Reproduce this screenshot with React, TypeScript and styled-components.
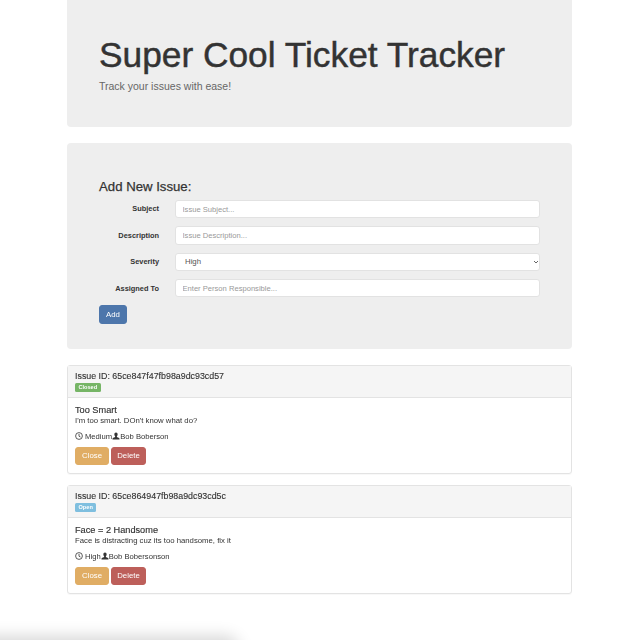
import React from "react";
import styled, { createGlobalStyle } from "styled-components";

const Global = createGlobalStyle`
  html, body { margin: 0; padding: 0; background: #fff; }
  body { font-family: "Liberation Sans", Arial, sans-serif; font-size: 9.33px; line-height: 1.43; color: #333; overflow: hidden; }
  * { box-sizing: border-box; }
`;

const Page = styled.div`
  position: relative;
  width: 623px;
  height: 640px;
  overflow: hidden;
`;

const Container = styled.main`
  width: 505px;
  margin-left: 67px;
  display: flex;
  flex-direction: column;
  will-change: opacity;
`;

const Jumbotron = styled.header`
  height: 127px;
  padding: 33px 32px 0;
  background: #eee;
  border-radius: 0 0 4px 4px;
`;

const Title = styled.h1`
  margin: 0;
  font-size: 35.3px;
  line-height: 44px;
  font-weight: 400;
  color: #333;
  -webkit-text-stroke: 0.45px #333;
`;

const Lead = styled.p`
  margin: 1px 0 0;
  font-size: 10.5px;
  line-height: 17px;
  font-weight: 400;
  color: #666;
`;

const Well = styled.section`
  margin-top: 16px;
  height: 206px;
  padding: 35px 32px 0;
  background: #eee;
  border-radius: 4px;
  display: flex;
  flex-direction: column;
`;

const FormTitle = styled.h3`
  margin: 0 0 4px;
  font-size: 13.2px;
  line-height: 18px;
  font-weight: 400;
  color: #333;
  -webkit-text-stroke: 0.25px #333;
`;

const Form = styled.form`
  display: flex;
  flex-direction: column;
  gap: 8px;
`;

const Row = styled.div`
  display: grid;
  grid-template-columns: 60px 365px;
  column-gap: 16px;
  align-items: center;
`;

const Label = styled.label`
  padding-top: 1px;
  text-align: right;
  font-size: 7.4px;
  font-weight: 700;
  color: #333;
`;

const Input = styled.input`
  width: 100%;
  height: 18.3px;
  padding: 0 6.5px;
  font: 7.6px "Liberation Sans", Arial, sans-serif;
  color: #555;
  background: #fff;
  border: 1px solid #e2e2e2;
  border-radius: 3px;
  outline: none;
  &::placeholder { color: #999; opacity: 1; }
`;

const SelectWrap = styled.div`
  position: relative;
  width: 100%;
  height: 18.6px;
`;

const Select = styled.select`
  width: 100%;
  height: 100%;
  padding: 0 9px;
  appearance: none;
  font: 7.8px "Liberation Sans", Arial, sans-serif;
  color: #555;
  background: #fff;
  border: 1px solid #e2e2e2;
  border-radius: 3px;
  outline: none;
`;

const Chevron = styled.svg`
  position: absolute;
  right: 1.5px;
  top: 6.5px;
  width: 6px;
  height: 6px;
  pointer-events: none;
`;

const AddButton = styled.button`
  align-self: flex-start;
  width: 28px;
  height: 18.5px;
  padding: 0;
  font: 7.8px "Liberation Sans", Arial, sans-serif;
  color: #fff;
  background: #4d76ab;
  border: 1px solid #4d76ab;
  border-radius: 3px;
`;

const Card = styled.article<{ $top: number }>`
  margin-top: ${(p) => p.$top}px;
  height: 109px;
  background: #fff;
  border: 1px solid #e3e3e3;
  border-radius: 3px;
  box-shadow: 0 1px 1px rgba(0, 0, 0, 0.03);
  display: flex;
  flex-direction: column;
`;

const CardHeader = styled.div`
  height: 32px;
  padding: 5px 7px 0;
  background: #f5f5f5;
  border-bottom: 1px solid #e3e3e3;
`;

const IssueId = styled.div`
  font-size: 8.85px;
  line-height: 11px;
  color: #333;
  -webkit-text-stroke: 0.12px #333;
`;

const Badge = styled.span<{ $color: string }>`
  display: block;
  width: fit-content;
  margin-top: 1px;
  padding: 0 3.5px;
  font-size: 5.6px;
  line-height: 9px;
  font-weight: 700;
  color: #fff;
  background: ${(p) => p.$color};
  border-radius: 1.5px;
`;

const CardBody = styled.div`
  padding: 7px 7px 0;
  display: flex;
  flex-direction: column;
`;

const IssueTitle = styled.h3`
  margin: 0;
  font-size: 9.2px;
  line-height: 11px;
  font-weight: 400;
  color: #333;
  -webkit-text-stroke: 0.15px #333;
`;

const IssueText = styled.p`
  margin: 0;
  font-size: 7.75px;
  line-height: 10.5px;
  color: #333;
`;

const Meta = styled.div`
  margin-top: 4px;
  display: flex;
  align-items: center;
  font-size: 7.65px;
  line-height: 11px;
  color: #333;
`;

const ClockSvg = styled.svg`
  width: 8px;
  height: 8px;
  margin-right: 2px;
  flex: none;
`;

const UserSvg = styled.svg`
  width: 8px;
  height: 8px;
  flex: none;
`;

const Actions = styled.div`
  margin-top: 5px;
  display: flex;
  gap: 2px;
`;

const ActionButton = styled.button<{ $color: string; $width: number }>`
  width: ${(p) => p.$width}px;
  height: 18.5px;
  padding: 0;
  font: 7.8px "Liberation Sans", Arial, sans-serif;
  color: #fff;
  background: ${(p) => p.$color};
  border: 1px solid ${(p) => p.$color};
  border-radius: 3px;
`;

const BottomShadow = styled.div`
  position: absolute;
  left: -40px;
  bottom: -30px;
  width: 275px;
  height: 30px;
  border-radius: 10px;
  box-shadow: 0 0 16px 4px rgba(0, 0, 0, 0.16);
`;

const ClockIcon = () => (
  <ClockSvg viewBox="0 0 16 16" fill="none" stroke="#333" strokeWidth="1.6">
    <circle cx="8" cy="8" r="6.8" />
    <path d="M8 4v4.4l3 1.6" />
  </ClockSvg>
);

const UserIcon = () => (
  <UserSvg viewBox="0 0 16 16" fill="#333">
    <path d="M8 1c2.200 0 3.300 1.700 3.300 3.800 0 1.600-.7 3-1.500 3.800v1.300c0 .6 4.700 1.600 5.200 3V15H1v-2.100c.5-1.400 5.200-2.400 5.200-3V8.600C5.400 7.800 4.700 6.400 4.700 4.800 4.700 2.700 5.800 1 8 1z" />
  </UserSvg>
);

type Issue = {
  id: string; status: string; color: string; title: string; text: string; severity: string; person: string;
};

const issues: Issue[] = [
  { id: "65ce847f47fb98a9dc93cd57", status: "Closed", color: "#76b566", title: "Too Smart", text: "I'm too smart. DOn't know what do?", severity: "Medium", person: "Bob Boberson" },
  { id: "65ce864947fb98a9dc93cd5c", status: "Open", color: "#7fbfdf", title: "Face = 2 Handsome", text: "Face is distracting cuz its too handsome, fix it", severity: "High", person: "Bob Bobersonson" },
];

export default function App() {
  return (
    <Page>
      <Global />
      <Container>
        <Jumbotron>
          <Title>Super Cool Ticket Tracker</Title>
          <Lead>Track your issues with ease!</Lead>
        </Jumbotron>
        <Well>
          <FormTitle>Add New Issue:</FormTitle>
          <Form onSubmit={(e) => e.preventDefault()}>
            <Row>
              <Label>Subject</Label>
              <Input placeholder="Issue Subject..." />
            </Row>
            <Row>
              <Label>Description</Label>
              <Input placeholder="Issue Description..." />
            </Row>
            <Row>
              <Label>Severity</Label>
              <SelectWrap>
                <Select defaultValue="High">
                  <option>High</option>
                  <option>Medium</option>
                  <option>Low</option>
                </Select>
                <Chevron viewBox="0 0 12 12" fill="none" stroke="#666" strokeWidth="2">
                  <path d="M2 4l4 4 4-4" />
                </Chevron>
              </SelectWrap>
            </Row>
            <Row>
              <Label>Assigned To</Label>
              <Input placeholder="Enter Person Responsible..." />
            </Row>
            <AddButton type="button">Add</AddButton>
          </Form>
        </Well>
        {issues.map((issue, i) => (
          <Card key={issue.id} $top={i === 0 ? 16 : 11}>
            <CardHeader>
              <IssueId>Issue ID: {issue.id}</IssueId>
              <Badge $color={issue.color}>{issue.status}</Badge>
            </CardHeader>
            <CardBody>
              <IssueTitle>{issue.title}</IssueTitle>
              <IssueText>{issue.text}</IssueText>
              <Meta>
                <ClockIcon />
                {issue.severity}
                <UserIcon />
                {issue.person}
              </Meta>
              <Actions>
                <ActionButton type="button" $color="#e0ad64" $width={34}>Close</ActionButton>
                <ActionButton type="button" $color="#bd5f5a" $width={35}>Delete</ActionButton>
              </Actions>
            </CardBody>
          </Card>
        ))}
      </Container>
      <BottomShadow />
    </Page>
  );
}
